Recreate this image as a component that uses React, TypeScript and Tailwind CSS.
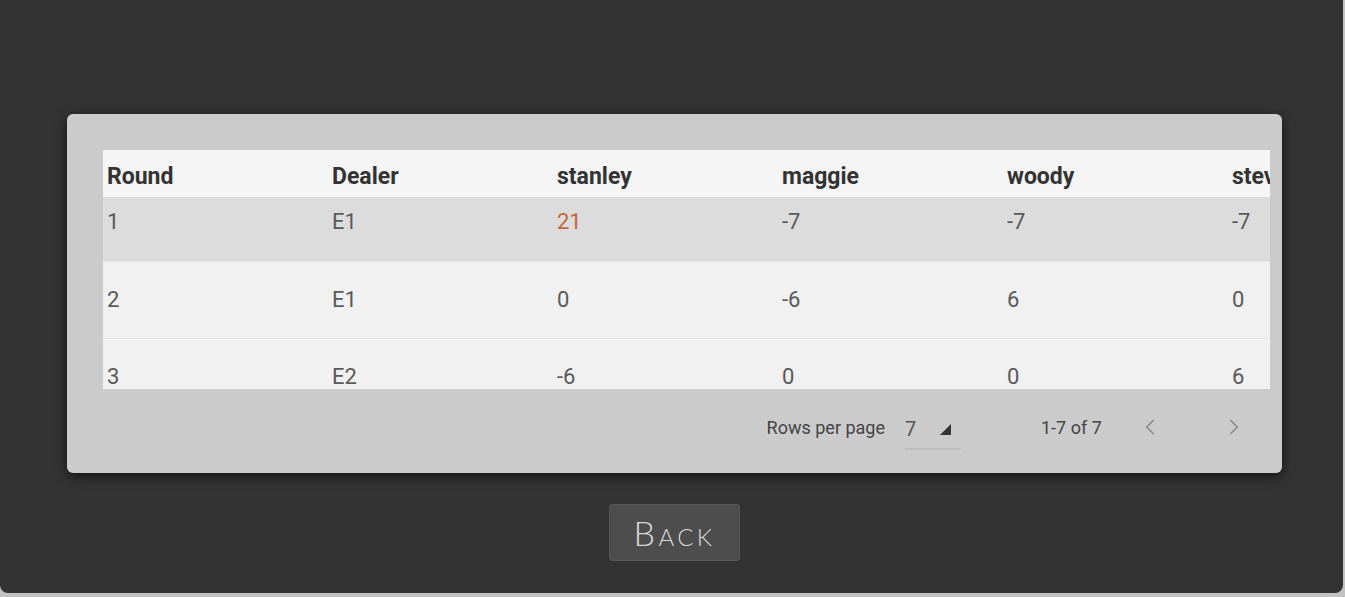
import { ChevronLeft, ChevronRight } from 'lucide-react'

const COLUMNS = ['Round', 'Dealer', 'stanley', 'maggie', 'woody', 'steve']

// Scores per round; the positive winner of the first round gets the accent colour.
const ROWS: { cells: string[]; highlight?: number }[] = [
  { cells: ['1', 'E1', '21', '-7', '-7', '-7'], highlight: 2 },
  { cells: ['2', 'E1', '0', '-6', '6', '0'] },
  { cells: ['3', 'E2', '-6', '0', '0', '6'] },
]

const font = { fontFamily: 'Roboto, "Noto Sans", sans-serif' }

function Cells({ cells, highlight }: { cells: string[]; highlight?: number }) {
  return (
    <>
      {cells.map((c, i) => (
        <div
          key={i}
          className={`w-[225px] shrink-0 pl-1 text-[22px] leading-6 ${
            i === highlight ? 'text-[#c0673f]' : 'text-[#5a5a5a]'
          }`}
        >
          {c}
        </div>
      ))}
    </>
  )
}

export default function App() {
  return (
    <div className="h-[597px] w-full bg-[#c2c2c2] overflow-hidden" style={font}>
      <div className="w-[1343px] h-[593px] bg-[#333333] rounded-b-[8px] pt-[114px] pl-[67px]">
        {/* Score card */}
        <div className="w-[1215px] h-[359px] bg-[#cbcbcb] rounded-[6px] shadow-[0_3px_12px_rgba(0,0,0,0.65)] pt-9 pl-9 pr-3 flex flex-col">
          <div className="w-[1167px] h-[239px] overflow-hidden bg-[#f1f1f1]">
            <div className="h-[47px] pt-[7px] bg-[#f5f5f5] flex items-center">
              {COLUMNS.map(col => (
                <div key={col} className="w-[225px] shrink-0 pl-1 text-[23px] font-bold text-[#333] whitespace-nowrap">
                  {col}
                </div>
              ))}
            </div>
            <div className="h-[65px] pt-[13px] bg-[#dcdcdc] border-b border-[#e4e4e4] flex items-start">
              <Cells {...ROWS[0]} />
            </div>
            {ROWS.slice(1).map(r => (
              <div key={r.cells[0]} className="h-[77px] shrink-0 bg-[#f1f1f1] border-b border-[#e2e2e2] flex items-center">
                <Cells {...r} />
              </div>
            ))}
          </div>

          {/* Pagination */}
          <div className="flex-1 flex items-center justify-end pr-3 pb-[8px] text-[#444]">
            <span className="text-[18px]">Rows per page</span>
            <div className="ml-5 w-[56px] h-[46px] relative flex items-center border-b-2 border-[#bdbdbd]">
              <span className="text-[20px] text-[#555] mt-[6px]">7</span>
              <svg className="absolute left-[35px] top-[20px]" width="11" height="11" viewBox="0 0 11 11">
                <polygon points="11,0 11,11 0,11" fill="#333" />
              </svg>
            </div>
            <span className="ml-20 text-[18px] w-[61px]">1-7 of 7</span>
            <div className="ml-6 flex gap-9">
              <div className="w-12 h-12 flex items-center justify-center text-[#8c8c8c]">
                <ChevronLeft size={26} strokeWidth={1.6} />
              </div>
              <div className="w-12 h-12 flex items-center justify-center text-[#8c8c8c]">
                <ChevronRight size={26} strokeWidth={1.6} />
              </div>
            </div>
          </div>
        </div>

        <div className="w-[1215px] flex justify-center mt-[31px]">
          <button
            className="w-[131px] h-[57px] bg-[#4d4d4d] border border-[#575757] rounded-[3px] text-[#dadada] text-[34px] font-light tracking-[0.1em] [font-variant:small-caps]"
            style={{ fontFamily: 'Lato, "DejaVu Sans", sans-serif' }}
          >
            Back
          </button>
        </div>
      </div>
    </div>
  )
}
